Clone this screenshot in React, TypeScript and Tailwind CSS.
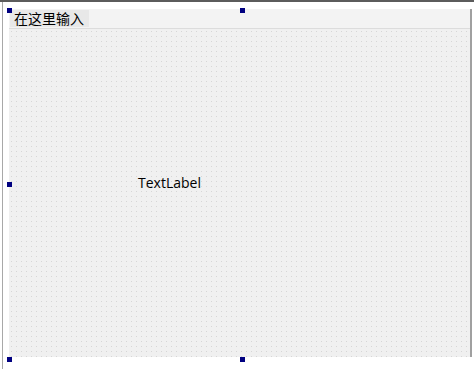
import React from "react";

const Handle: React.FC<{ className: string }> = ({ className }) => (
  <div className={`absolute w-[5px] h-[5px] bg-[#000080] ${className}`} />
);

const App: React.FC = () => {
  return (
    <div className="relative w-[474px] h-[369px] bg-white border-t-2 border-[#5c5c5c] pl-[2px] overflow-hidden">
      <div className="h-full border-l border-[#a8a8a8] pl-[6px] pt-[7px]">
        <div className="w-[463px] h-[348px] bg-[#f0f0f0] border-r-2 border-[#a0a0a0] flex flex-col">
          <div className="h-[20px] flex bg-[#f3f3f3] border-b border-[#dcdcdc]">
            <div
              className="ml-[1px] mt-[1px] w-[79px] h-[17px] bg-[#e8e8e8] pl-[4px] text-[14px] leading-[17px] text-black whitespace-nowrap"
              style={{ fontFamily: '"Noto Sans CJK SC", "Noto Sans", sans-serif' }}
            >
              在这里输入
            </div>
          </div>
          <div className="flex-1 flex items-center bg-[#f0f0f0] bg-[radial-gradient(#d6d6d6_0.6px,transparent_0.8px)] bg-[size:5px_5px]">
            <span
              className="ml-[129px] mb-[22px] text-[14px] text-black"
              style={{ fontFamily: '"Open Sans", "Noto Sans", sans-serif' }}
            >
              TextLabel
            </span>
          </div>
        </div>
      </div>
      <Handle className="left-[7px] top-[6px]" />
      <Handle className="left-[240px] top-[6px]" />
      <Handle className="left-[7px] top-[180px]" />
      <Handle className="left-[7px] top-[355px]" />
      <Handle className="left-[240px] top-[355px]" />
    </div>
  );
};

export default App;
